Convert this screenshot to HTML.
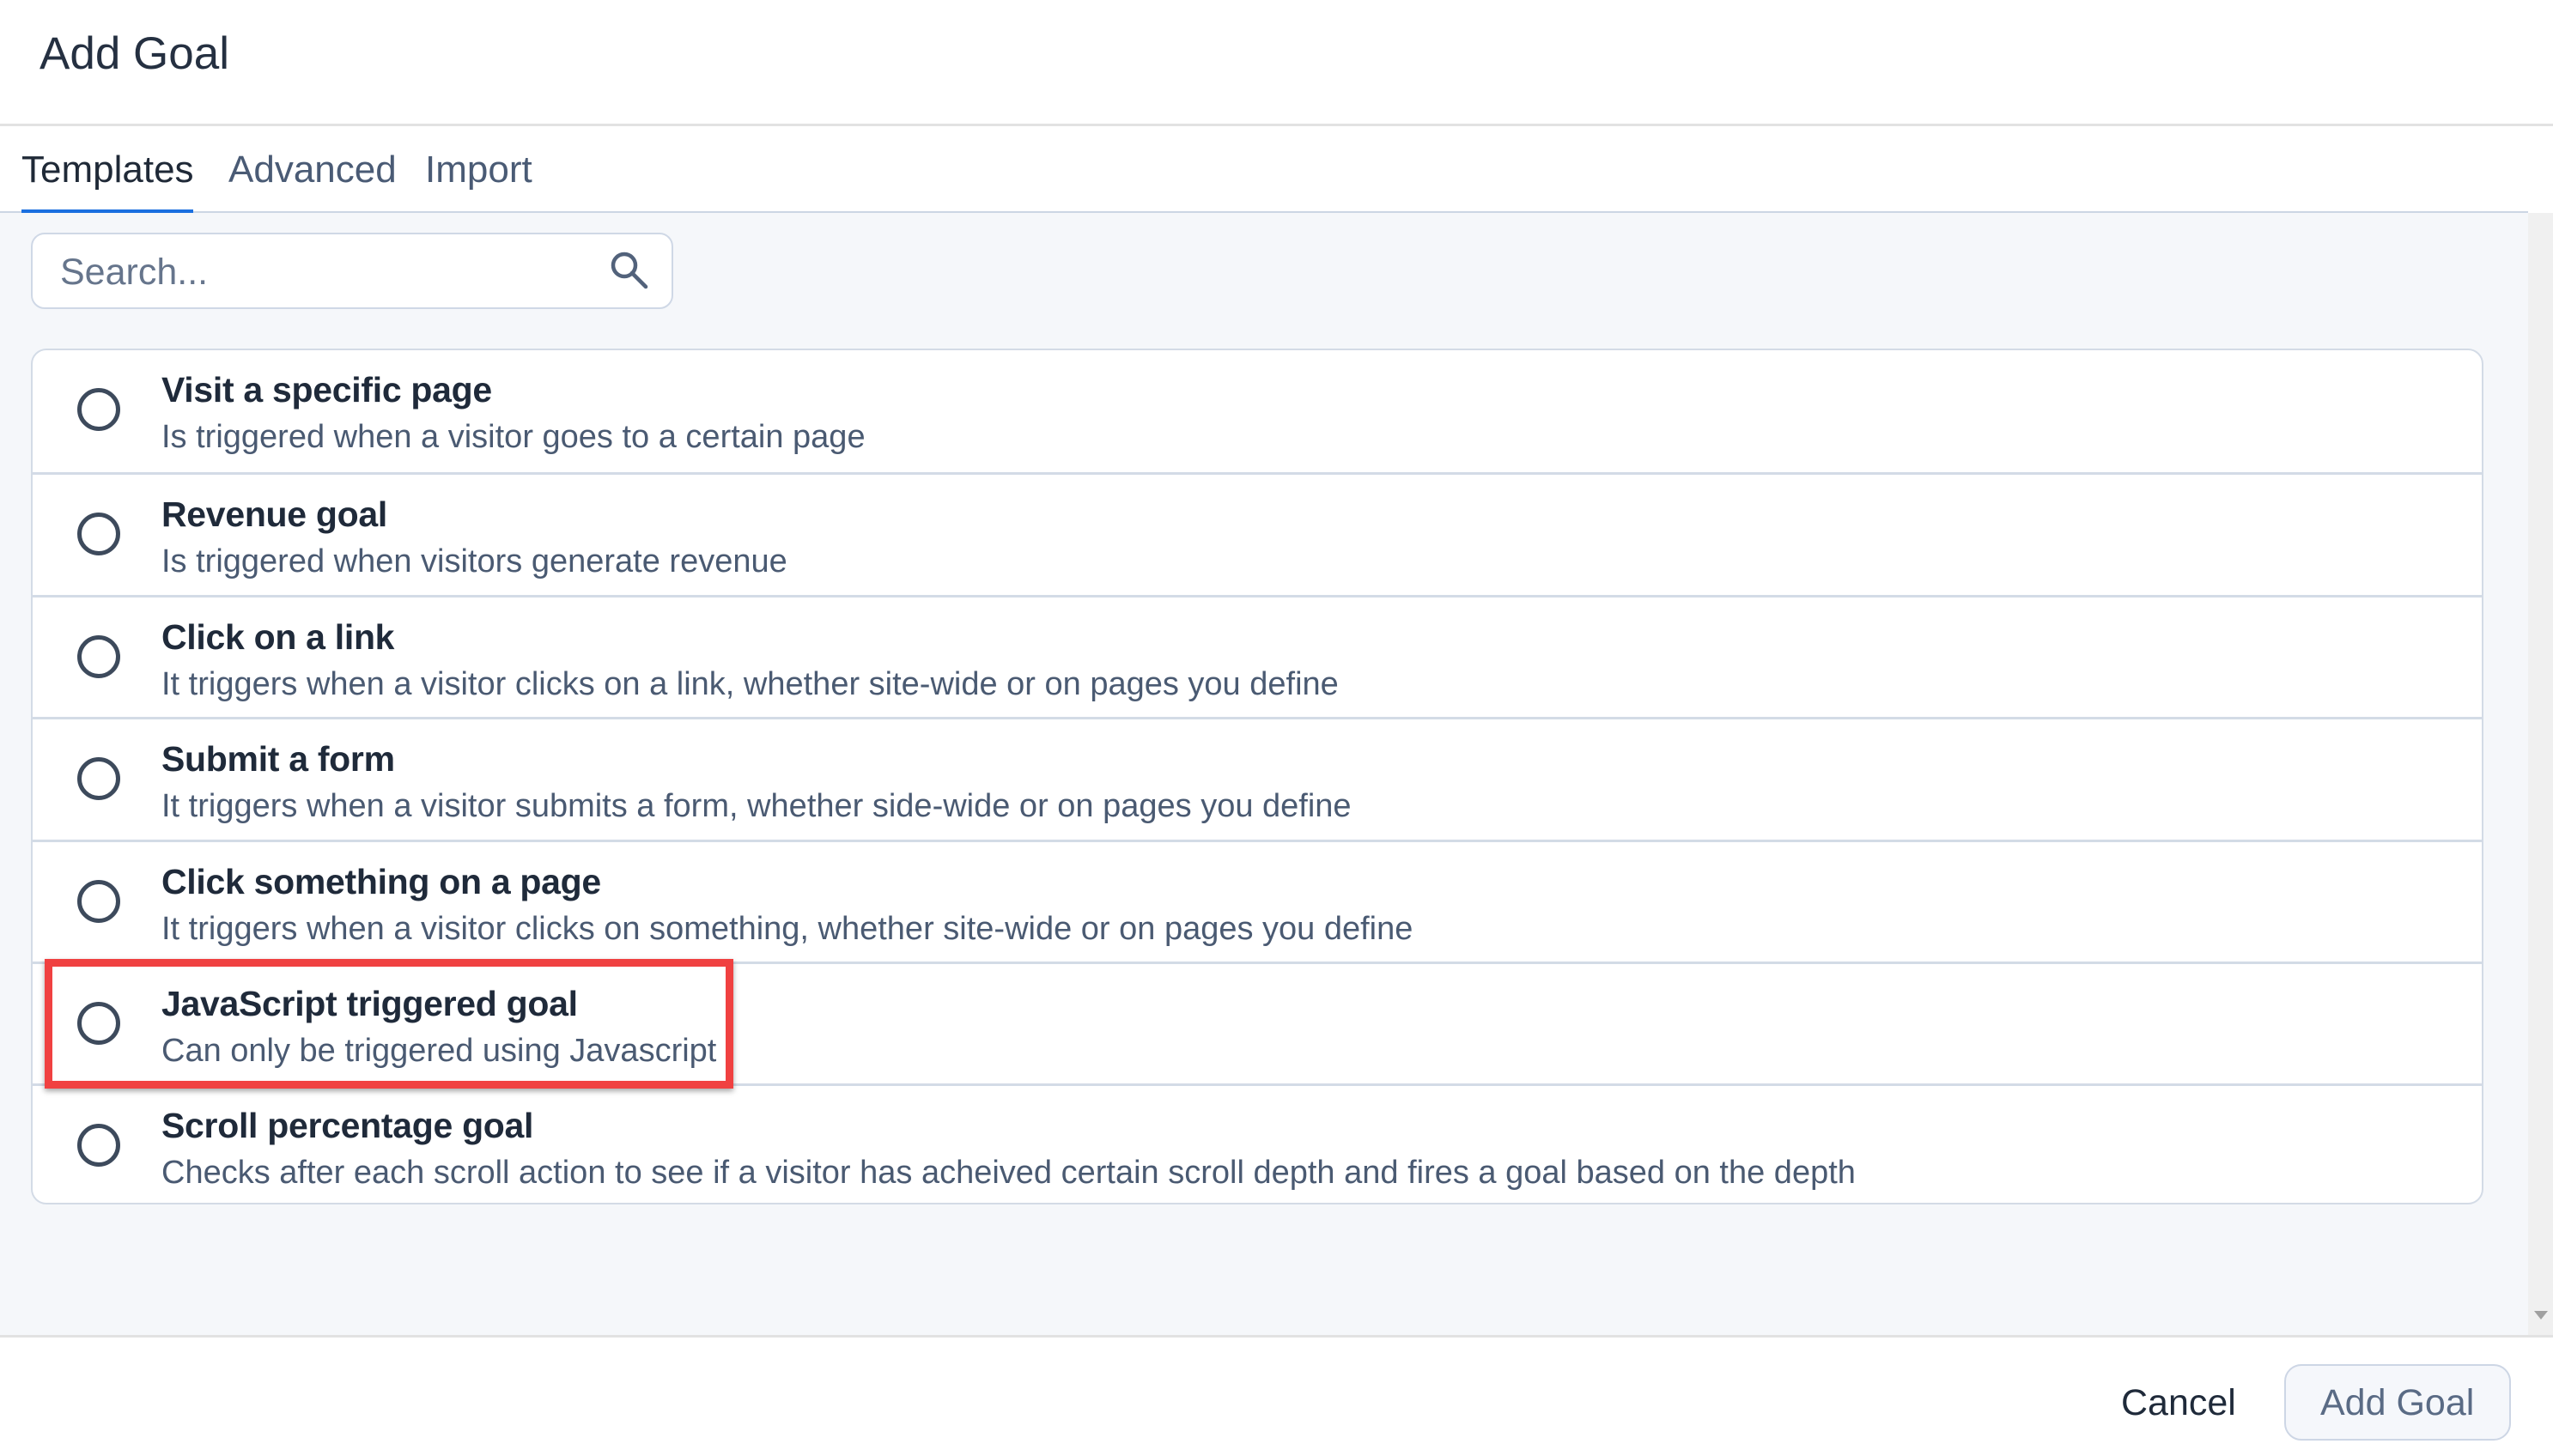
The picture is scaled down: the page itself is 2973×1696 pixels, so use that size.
<!DOCTYPE html>
<html><head><meta charset="utf-8"><style>
*{margin:0;padding:0;box-sizing:border-box}
body{width:2973px;height:1696px;background:#fff;position:relative;overflow:hidden;font-family:"Liberation Sans",sans-serif}
.a{position:absolute;white-space:nowrap;line-height:1}
.card{position:absolute;left:36px;top:406px;width:2856px;height:997px;background:#fff;border:2px solid #d3dbe6;border-radius:18px;overflow:hidden}
.row{position:absolute;left:0;width:100%;height:142.4px;border-top:3px solid #d3dbe6}
.row:first-child{border-top:none}
.rad{position:absolute;left:52px;width:50px;height:50px;border:5px solid #3d4a5c;border-radius:50%}
.t{position:absolute;left:150px;font-size:41px;font-weight:bold;color:#1f2a3a;letter-spacing:-0.3px;line-height:1;white-space:nowrap}
.s{position:absolute;left:150px;font-size:38px;color:#4a5a72;line-height:1;white-space:nowrap}
</style></head><body>
<div class="a" style="left:46px;top:36px;font-size:53px;color:#253041">Add Goal</div>
<div style="position:absolute;left:0;top:144px;width:2973px;height:3px;background:#e2e2e2"></div>
<div class="a" style="left:25px;top:176px;font-size:44px;color:#1f2937">Templates</div>
<div class="a" style="left:266px;top:176px;font-size:44px;color:#4a5b75">Advanced</div>
<div class="a" style="left:495px;top:176px;font-size:44px;color:#4a5b75">Import</div>
<div style="position:absolute;left:0;top:246px;width:2944px;height:1310px;background:#f5f7fa;border-top:2px solid #ccd6e4"></div>
<div style="position:absolute;left:25px;top:244px;width:200px;height:4px;background:#1a6fe0"></div>
<div style="position:absolute;left:2944px;top:248px;width:29px;height:1308px;background:#f0f0f0"></div>
<div style="position:absolute;left:2951px;top:1527px;width:0;height:0;border-left:8px solid transparent;border-right:8px solid transparent;border-top:10px solid #a0a0a0"></div>
<div style="position:absolute;left:36px;top:271px;width:748px;height:89px;background:#fff;border:2px solid #cfd8e6;border-radius:16px"></div>
<div class="a" style="left:70px;top:296px;font-size:43px;color:#66758c">Search...</div>
<svg style="position:absolute;left:700px;top:285px" width="60" height="60" viewBox="700 285 60 60"><circle cx="727" cy="309" r="13" fill="none" stroke="#52627b" stroke-width="4.5"/><line x1="736" y1="318" x2="752" y2="334" stroke="#52627b" stroke-width="4.5" stroke-linecap="round"/></svg>
<div class="card">
<div class="row" style="top:0"><div class="rad" style="top:44px"></div><div class="t" style="top:26px">Visit a specific page</div><div class="s" style="top:82px">Is triggered when a visitor goes to a certain page</div></div>
<div class="row" style="top:142.4px"><div class="rad" style="top:44px"></div><div class="t" style="top:26px">Revenue goal</div><div class="s" style="top:82px">Is triggered when visitors generate revenue</div></div>
<div class="row" style="top:284.8px"><div class="rad" style="top:44px"></div><div class="t" style="top:26px">Click on a link</div><div class="s" style="top:82px">It triggers when a visitor clicks on a link, whether site-wide or on pages you define</div></div>
<div class="row" style="top:427.2px"><div class="rad" style="top:44px"></div><div class="t" style="top:26px">Submit a form</div><div class="s" style="top:82px">It triggers when a visitor submits a form, whether side-wide or on pages you define</div></div>
<div class="row" style="top:569.6px"><div class="rad" style="top:44px"></div><div class="t" style="top:26px">Click something on a page</div><div class="s" style="top:82px">It triggers when a visitor clicks on something, whether site-wide or on pages you define</div></div>
<div class="row" style="top:712px"><div class="rad" style="top:44px"></div><div class="t" style="top:26px">JavaScript triggered goal</div><div class="s" style="top:82px">Can only be triggered using Javascript</div></div>
<div class="row" style="top:854.4px"><div class="rad" style="top:44px"></div><div class="t" style="top:26px">Scroll percentage goal</div><div class="s" style="top:82px">Checks after each scroll action to see if a visitor has acheived certain scroll depth and fires a goal based on the depth</div></div>
</div>
<div style="position:absolute;left:52px;top:1117px;width:802px;height:151px;border:9px solid #f04141;box-shadow:0 3px 6px rgba(0,0,0,0.35)"></div>
<div style="position:absolute;left:0;top:1555px;width:2973px;height:3px;background:#e2e2e2"></div>
<div class="a" style="left:2470px;top:1613px;font-size:43px;color:#1f2a3a">Cancel</div>
<div style="position:absolute;left:2660px;top:1589px;width:264px;height:89px;background:#f5f7fb;border:2px solid #cdd6e5;border-radius:20px"></div>
<div class="a" style="left:2702px;top:1613px;font-size:43px;color:#5a6b85">Add Goal</div>
</body></html>
